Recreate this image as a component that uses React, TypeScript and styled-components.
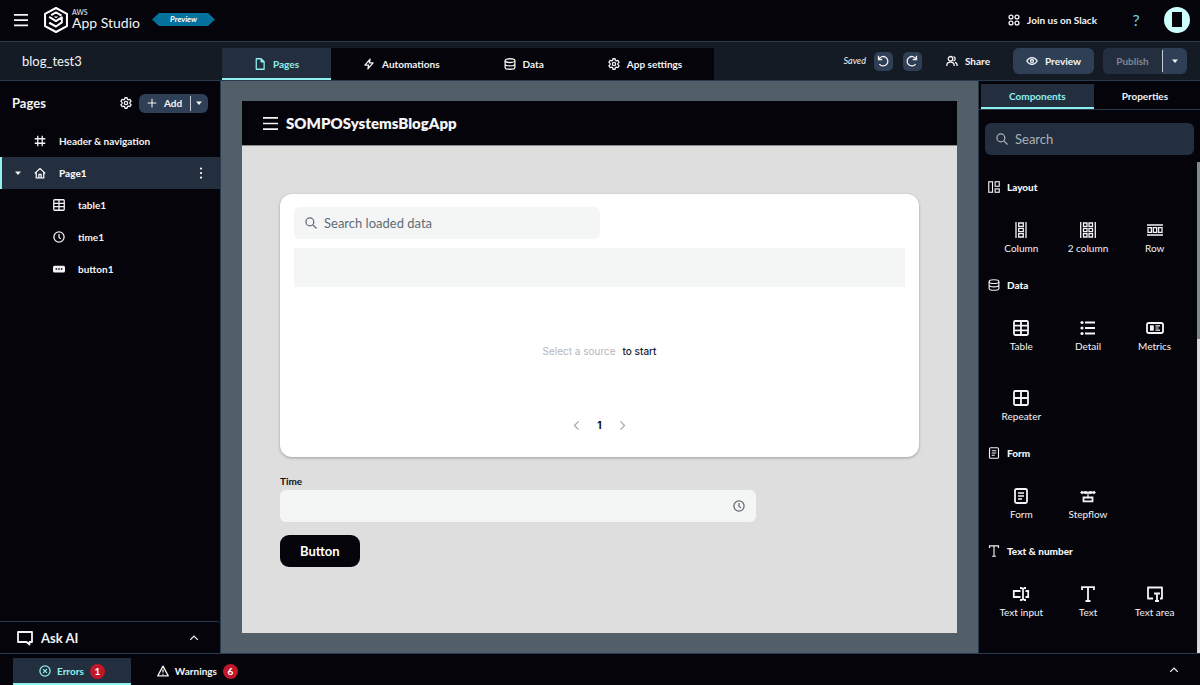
import React from "react";
import styled, { createGlobalStyle, css } from "styled-components";

const color = {
  ink: "#04040a",
  panel: "#232f3e",
  bar: "#141b24",
  line: "#2a3a4e",
  button: "#2f3f55",
  aqua: "#8ff0ee",
  text: "#f4f4f6",
  canvas: "#525f69",
  page: "#dedede",
  field: "#f4f6f6",
  red: "#c0172b",
};

const GlobalStyle = createGlobalStyle`
  * { box-sizing: border-box; }
  body {
    margin: 0;
    background: ${color.ink};
    color: ${color.text};
    font-family: Lato, "Noto Sans", sans-serif;
    font-size: 10px;
    line-height: 16px;
  }
  button, input { font: inherit; color: inherit; }
  button { border: 0; padding: 0; background: none; cursor: pointer; }
  h1, h2, h3, ul, p { margin: 0; padding: 0; font: inherit; }
  ul { list-style: none; }
  a { color: inherit; text-decoration: none; }
`;

/* ---------- icons ---------- */

const Svg = styled.svg<{ $size: number; $stroke: number }>`
  display: block;
  flex: none;
  width: ${(p) => p.$size}px;
  height: ${(p) => p.$size}px;
  fill: none;
  stroke: currentColor;
  stroke-width: ${(p) => p.$stroke};
`;

const dot = { fill: "currentColor", stroke: "none" };

const glyphs = {
  menu: <path d="M0 2h16M0 8h16M0 14h16" />,
  slack: (
    <>
      <circle cx="4" cy="4" r="2.6" />
      <circle cx="12" cy="4" r="2.6" />
      <circle cx="4" cy="12" r="2.6" />
      <circle cx="12" cy="12" r="2.6" />
    </>
  ),
  file: <path d="M9.500 1H3v14h10.500V5L9.500 1v4h4" strokeLinejoin="round" />,
  bolt: <path d="M9.500 1.500 2.500 9.500h5L6.500 14.500l7-8h-5z" strokeLinejoin="round" />,
  data: (
    <>
      <ellipse cx="8" cy="3.500" rx="6.500" ry="2.500" />
      <path d="M1.500 3.500v9c0 1.400 2.900 2.500 6.500 2.500s6.500-1.100 6.500-2.500v-9M1.500 8c0 1.400 2.900 2.500 6.500 2.500s6.500-1.100 6.500-2.500" />
    </>
  ),
  gear: (
    <>
      <path
        d="M6.600 1h2.800l.5 2.100 1.400.8 2.100-.6 1.400 2.400L13.200 7.200v1.600l1.600 1.500-1.400 2.400-2.100-.6-1.400.8-.5 2.100H6.600l-.5-2.100-1.400-.8-2.100.6-1.400-2.400 1.600-1.500V7.200L1.200 5.700l1.400-2.400 2.100.6 1.400-.8z"
        strokeLinejoin="round"
      />
      <circle cx="8" cy="8" r="2.200" />
    </>
  ),
  undo: <path d="M2 1v5h5M2.300 6A6.300 6.300 0 1 1 3.200 12.200" />,
  redo: <path d="M14 1v5H9M13.700 6A6.300 6.300 0 1 0 12.800 12.200" />,
  share: (
    <>
      <circle cx="6" cy="5" r="3" />
      <path d="M1 14.500c0-3.200 2-5 5-5s5 1.800 5 5M10 2.100a3 3 0 0 1 0 5.800M12 9.800c2 .7 3 2.300 3 4.700" />
    </>
  ),
  eye: (
    <>
      <path d="M1 8c1.800-3 4.200-4.500 7-4.500S13.200 5 15 8c-1.800 3-4.200 4.500-7 4.500S2.800 11 1 8z" strokeLinejoin="round" />
      <circle cx="8" cy="8" r="2" />
    </>
  ),
  caret: <path d="M2 5h12L8 12z" {...dot} />,
  up: <path d="m2 11 6-6 6 6" />,
  left: <path d="m11 2-6 6 6 6" />,
  right: <path d="m5 2 6 6-6 6" />,
  plus: <path d="M8 1v14M1 8h14" />,
  hash: <path d="M5 1v14M11 1v14M1 5h14M1 11h14" />,
  home: <path d="M1 8.500 8 2l7 6.500M3 7v7.500h10V7M6.500 14v-4h3v4" strokeLinejoin="round" />,
  more: (
    <>
      <circle cx="8" cy="2" r="1.500" {...dot} />
      <circle cx="8" cy="8" r="1.500" {...dot} />
      <circle cx="8" cy="14" r="1.500" {...dot} />
    </>
  ),
  table: (
    <>
      <rect x="1" y="1" width="14" height="14" rx="1.200" />
      <path d="M1 5.700h14M1 10.300h14M8 1v14" />
    </>
  ),
  clock: (
    <>
      <circle cx="8" cy="8" r="6.800" />
      <path d="M8 4v4.500l2.500 2" />
    </>
  ),
  button: (
    <>
      <rect x="0" y="3.500" width="16" height="9" rx="2" {...dot} />
      <path d="M3.500 8h2M7 8h2M10.500 8h2" stroke={color.ink} />
    </>
  ),
  chat: <path d="M1 2h14v10h-2.500v2.500L9.500 12H1z" strokeLinejoin="round" />,
  error: (
    <>
      <circle cx="8" cy="8" r="6.800" />
      <path d="m5.500 5.500 5 5M10.500 5.500l-5 5" />
    </>
  ),
  warning: <path d="M8 1.500 15 14.500H1zM8 6v4M8 11.500v1.500" strokeLinejoin="round" />,
  search: (
    <>
      <circle cx="6.500" cy="6.500" r="5.200" />
      <path d="m10.500 10.500 4.800 4.800" />
    </>
  ),
  layout: (
    <>
      <rect x="1" y="1" width="5" height="14" />
      <rect x="9.500" y="1" width="5.500" height="6" />
      <rect x="9.500" y="10.500" width="5.500" height="4.500" />
    </>
  ),
  column: (
    <>
      <path d="M3 0v16M13 0v16" strokeWidth="1.300" />
      <path d="M5.700 1h4.600v3.400H5.700zM5.700 6.300h4.600v3.400H5.700zM5.700 11.600h4.600V15H5.700z" strokeWidth="1.300" />
    </>
  ),
  columns: (
    <>
      <path d="M.7 0v16M15.300 0v16" strokeWidth="1.300" />
      <path
        d="M3.500 1H7v3.400H3.500zM3.500 6.300H7v3.400H3.500zM3.500 11.600H7V15H3.500zM9 1h3.500v3.400H9zM9 6.300h3.500v3.400H9zM9 11.600h3.500V15H9z"
        strokeWidth="1.300"
      />
    </>
  ),
  row: (
    <>
      <path d="M0 3h16M0 13h16" strokeWidth="1.300" />
      <path d="M1 5.700h3.400v4.600H1zM6.300 5.700h3.400v4.600H6.300zM11.600 5.700H15v4.600h-3.400z" strokeWidth="1.300" />
    </>
  ),
  detail: (
    <>
      <circle cx="2" cy="2.500" r="1.600" {...dot} />
      <circle cx="2" cy="8" r="1.600" {...dot} />
      <circle cx="2" cy="13.500" r="1.600" {...dot} />
      <path d="M5 2.500h10M5 8h10M5 13.500h10" />
    </>
  ),
  metrics: (
    <>
      <rect x="0" y="3" width="16" height="10" rx="1.800" />
      <rect x="3" y="5.300" width="3.800" height="5.400" {...dot} />
      <path d="M8.500 5.800H13M8.500 8h3M8.500 10.200H13" strokeWidth="1.200" />
    </>
  ),
  repeater: (
    <>
      <rect x="1" y="1" width="14" height="14" rx="1.200" />
      <path d="M1 8h14M8 1v14" />
    </>
  ),
  form: (
    <>
      <rect x="2" y="1" width="12" height="14" rx="1.500" />
      <path d="M5 5h6M5 8h6M5 11h4" strokeWidth="1.400" />
    </>
  ),
  stepflow: (
    <>
      <path d="M1 4.500h14M3.500 13.300V9.500h9v3.800z" />
      <path d="M0 4.500 2.500 2.500v4zM16 4.500 13.500 2.500v4z" {...dot} />
      <circle cx="5.500" cy="4.500" r="1.600" {...dot} />
      <circle cx="10.500" cy="4.500" r="1.600" {...dot} />
      <path d="M8 5v4" strokeWidth="1.200" />
    </>
  ),
  type: <path d="M2 4V1.200h12V4M8 1v14M5.500 15h5" />,
  textInput: (
    <path d="M7.500 5H.8v6h6.700M12.500 5h2.700v6h-2.700M7 2h1.500L10 3.200 11.500 2H13M7 14h1.500l1.500-1.200 1.500 1.200H13M10 3v10" />
  ),
  textArea: <path d="M6 12.500H1V1.500h14v11h-2M7 7.500h6M10 7.500V15M8 15h4" strokeLinejoin="round" />,
};

type Glyph = keyof typeof glyphs;

function Icon({ name, size = 12, stroke = 1.700 }: { name: Glyph; size?: number; stroke?: number }) {
  return (
    <Svg $size={size} $stroke={stroke} viewBox="0 0 16 16" overflow="visible" aria-hidden="true">
      {glyphs[name]}
    </Svg>
  );
}

const LogoSvg = styled.svg`
  display: block;
  width: 24px;
  height: 26px;
  fill: none;
  stroke: #fff;
`;

function Logo() {
  return (
    <LogoSvg viewBox="0 0 70 76" aria-hidden="true" strokeLinejoin="round">
      <path d="M35 3 67 20v36L35 73 3 56V20z" strokeWidth="6" />
      <path d="M21 24 35 16l16 9M15 29l20 12 17-11v15L35 57 15 46" strokeWidth="6" />
      <path d="M28 28h14l-7 5z" fill="#fff" stroke="none" />
    </LogoSvg>
  );
}

/* ---------- frame ---------- */

const Shell = styled.div`
  display: flex;
  flex-direction: column;
  min-height: 100vh;
`;

const TopBar = styled.header`
  display: flex;
  align-items: center;
  height: 42px;
  padding: 0 10px 2px 14px;
  border-bottom: 1px solid ${color.line};
`;

const IconButton = styled.button`
  display: flex;
  align-items: center;
  justify-content: center;
`;

const Brand = styled.a`
  display: flex;
  align-items: center;
  gap: 4px;
  margin-left: 16px;
`;

const BrandText = styled.span`
  display: flex;
  flex-direction: column;
  font-size: 14px;
  line-height: 15px;
`;

const BrandSmall = styled.span`
  font-size: 7px;
  line-height: 6px;
`;

const PreviewTag = styled.span`
  width: 63px;
  margin-left: 12px;
  clip-path: polygon(7px 0, calc(100% - 7px) 0, 100% 50%, calc(100% - 7px) 100%, 7px 100%, 0 50%);
  background: #05719c;
  color: #fff;
  font-size: 8px;
  font-style: italic;
  font-weight: 700;
  line-height: 13px;
  text-align: center;
`;

const Spacer = styled.div`
  flex: 1;
`;

const BarLink = styled.a`
  display: flex;
  align-items: center;
  gap: 7px;
  font-weight: 700;
`;

const HelpButton = styled(IconButton)`
  width: 24px;
  margin: 0 16px 0 27px;
  color: #6ed3e6;
  font-size: 16px;
`;

const Avatar = styled(IconButton)`
  width: 26px;
  height: 26px;
  border-radius: 50%;
  background: #ccfffb;

  &::before {
    content: "";
    width: 10px;
    height: 15px;
    background: ${color.ink};
  }
`;

const ToolBar = styled.div`
  display: flex;
  align-items: center;
  height: 39px;
  padding-right: 13px;
  background: ${color.bar};
  border-bottom: 1px solid ${color.line};
`;

const AppName = styled.h1`
  width: 222px;
  padding-left: 22px;
  font-size: 13px;
`;

const TabList = styled.div`
  display: flex;
  align-self: flex-end;
  background: ${color.ink};
`;

const activeTab = css`
  background: ${color.panel};
  color: ${color.aqua};
  border-bottom-color: ${color.aqua};
`;

const Tab = styled.button<{ $active?: boolean }>`
  display: flex;
  align-items: center;
  justify-content: center;
  gap: 7px;
  height: 32px;
  padding: 2px 32px 0;
  border-bottom: 2px solid transparent;
  font-weight: 700;
  ${(p) => p.$active && activeTab}
`;

const Saved = styled.span`
  margin-right: 8px;
  font-size: 9px;
  font-style: italic;
`;

const SquareButton = styled(IconButton)`
  width: 19px;
  height: 19px;
  margin-right: 10px;
  border-radius: 5px;
  background: ${color.button};
`;

const ShareButton = styled.button`
  display: flex;
  align-items: center;
  gap: 7px;
  margin: 0 23px 0 14px;
  font-weight: 700;
`;

const PreviewButton = styled.button`
  display: flex;
  align-items: center;
  justify-content: center;
  gap: 7px;
  width: 81px;
  height: 26px;
  margin-right: 9px;
  border-radius: 6px;
  background: ${color.button};
  font-weight: 700;
`;

const SplitButton = styled.div<{ $height: number }>`
  display: flex;
  height: ${(p) => p.$height}px;
  border-radius: 6px;
  background: ${color.button};
  overflow: hidden;
  font-weight: 700;
`;

const PublishButton = styled.button`
  width: 59px;
  background: ${color.panel};
  color: #7e8894;
`;

const AddButton = styled.button`
  display: flex;
  align-items: center;
  justify-content: center;
  gap: 7px;
  width: 51px;
`;

const SplitCaret = styled(IconButton)<{ $width: number }>`
  position: relative;
  width: ${(p) => p.$width}px;

  &::before {
    content: "";
    position: absolute;
    inset: 2px auto 2px 0;
    width: 1px;
    background: #c7cdd4;
  }
`;

const Workspace = styled.div`
  display: flex;
  flex: 1;
`;

/* ---------- page tree ---------- */

const Sidebar = styled.nav`
  display: flex;
  flex-direction: column;
  width: 221px;
  border-right: 1px solid ${color.line};
`;

const SidebarHead = styled.div`
  display: flex;
  align-items: center;
  gap: 7px;
  height: 44px;
  padding: 0 12px;
`;

const SidebarTitle = styled.h2`
  flex: 1;
  font-size: 13px;
  font-weight: 700;
`;

const TreeRow = styled.li<{ $level: number; $active?: boolean }>`
  display: flex;
  align-items: center;
  height: 32px;
  padding: 0 13px 0 ${(p) => (p.$level ? 51 : 0)}px;
  font-weight: 700;
  border-left: 2px solid transparent;
  ${(p) =>
    p.$active &&
    css`
      background: ${color.panel};
      border-left-color: ${color.aqua};
      font-weight: 900;
    `}
`;

const TreeToggle = styled(IconButton)`
  width: 32px;
`;

const TreeLink = styled.a`
  display: flex;
  flex: 1;
  align-items: center;
  gap: 13px;
`;

const AskAi = styled.button`
  display: flex;
  align-items: center;
  gap: 8px;
  height: 32px;
  margin-top: auto;
  padding: 0 21px 0 17px;
  border-top: 1px solid ${color.line};
  border-radius: 0 3px 0 0;
  font-size: 13px;
  font-weight: 700;
`;

const Grow = styled.span`
  flex: 1;
  text-align: left;
`;

/* ---------- canvas ---------- */

const Canvas = styled.main`
  display: flex;
  flex: 1;
  padding: 20px 21px;
  background: ${color.canvas};
`;

const Artboard = styled.div`
  display: flex;
  flex: 1;
  flex-direction: column;
  background: ${color.page};
`;

const ArtHeader = styled.header`
  display: flex;
  align-items: center;
  gap: 8px;
  height: 45px;
  padding: 0 21px;
  background: ${color.ink};
  border-bottom: 1px solid #8b8b90;
  font-size: 15px;
  font-weight: 800;
`;

const ArtBody = styled.div`
  display: flex;
  flex-direction: column;
  align-items: flex-start;
  padding: 48px 38px;
  color: #10141c;
`;

const TableCard = styled.section`
  display: flex;
  flex-direction: column;
  width: 100%;
  height: 263px;
  padding: 13px 14px 24px;
  border-radius: 12px;
  background: #fff;
  box-shadow: 0 1px 3px rgba(0, 10, 30, 0.3);
`;

const field = css`
  display: flex;
  align-items: center;
  height: 32px;
  border-radius: 6px;
  padding: 0 11px;
`;

const LoadedSearch = styled.label`
  ${field}
  gap: 7px;
  width: 50%;
  background: ${color.field};
  color: #5f6b75;
`;

const BareInput = styled.input`
  flex: 1;
  min-width: 0;
  padding: 0;
  border: 0;
  outline: 0;
  background: none;
  font-size: 13px;

  &::placeholder {
    color: inherit;
    opacity: 1;
  }
`;

const TableHead = styled.div`
  height: 39px;
  margin-top: 9px;
  background: ${color.field};
`;

const EmptyState = styled.p`
  display: flex;
  flex: 1;
  align-items: center;
  justify-content: center;
  gap: 7px;
  padding-bottom: 2px;
  color: #1a2230;
  font-family: Inter, sans-serif;
  font-weight: 500;
`;

const SourceLink = styled.a`
  color: #b9b5b9;
  font-weight: 400;
`;

const Pager = styled.div`
  display: flex;
  align-items: center;
  justify-content: center;
  gap: 15px;
  color: #a3a3a8;
`;

const PageNumber = styled.button`
  color: #04040a;
  font-family: Inter, sans-serif;
  font-weight: 700;
`;

const TimeLabel = styled.label`
  margin-top: 16px;
  font-weight: 700;
`;

const TimeField = styled.div`
  ${field}
  width: calc(75% - 3px);
  margin-top: 1px;
  background: ${color.field};
  color: #5f6b75;
`;

const PrimaryButton = styled.button`
  height: 32px;
  margin-top: 13px;
  padding: 0 20px;
  border-radius: 9px;
  background: ${color.ink};
  color: #fff;
  font-size: 13px;
  font-weight: 700;
`;

/* ---------- component palette ---------- */

const Palette = styled.aside`
  display: flex;
  flex-direction: column;
  width: 222px;
  border-left: 1px solid ${color.line};
`;

const PaletteTabs = styled.div`
  display: flex;
  padding: 3px 0 0 2px;
  border-bottom: 1px solid ${color.line};
`;

const PaletteTab = styled.button<{ $active?: boolean }>`
  height: 25px;
  padding: 0 28px;
  border-bottom: 2px solid transparent;
  font-weight: 700;
  ${(p) => p.$active && activeTab}
`;

const PaletteSearch = styled.label`
  ${field}
  gap: 7px;
  margin: 13px 6px 7px;
  background: ${color.panel};
  color: #aab2bb;
`;

const PaletteBody = styled.div`
  display: flex;
  flex: 1;
`;

const PaletteList = styled.div`
  flex: 1;
  padding-top: 11px;
`;

const GroupTitle = styled.h3`
  display: flex;
  align-items: center;
  gap: 7px;
  height: 28px;
  padding-left: 9px;
  font-weight: 900;
`;

const GroupGrid = styled.div`
  display: grid;
  grid-template-columns: repeat(3, 1fr);
  padding: 0 9px;
`;

const Component = styled.button`
  display: flex;
  flex-direction: column;
  align-items: center;
  justify-content: center;
  gap: 2px;
  height: 70px;
  padding-top: 6px;
`;

const ScrollTrack = styled.div`
  width: 3px;
  background: #dcd9e0;
`;

const ScrollThumb = styled.div`
  height: 36%;
  background: #7f8a92;
`;

/* ---------- status bar ---------- */

const StatusBar = styled.footer`
  display: flex;
  align-items: flex-end;
  height: 32px;
  padding: 0 21px 0 13px;
  border-top: 1px solid ${color.line};
`;

const StatusTab = styled.button<{ $active?: boolean }>`
  display: flex;
  align-items: center;
  gap: 6px;
  height: 27px;
  padding: 1px 26px 0;
  border-bottom: 2px solid transparent;
  font-weight: 700;
  ${(p) => p.$active && activeTab}
`;

const Count = styled.span`
  width: 15px;
  border-radius: 50%;
  background: ${color.red};
  color: #fff;
  line-height: 15px;
  text-align: center;
`;

const StatusToggle = styled(IconButton)`
  align-self: center;
`;

const groups: { title: string; icon: Glyph; items: [string, Glyph][] }[] = [
  { title: "Layout", icon: "layout", items: [["Column", "column"], ["2 column", "columns"], ["Row", "row"]] },
  {
    title: "Data",
    icon: "data",
    items: [["Table", "table"], ["Detail", "detail"], ["Metrics", "metrics"], ["Repeater", "repeater"]],
  },
  { title: "Form", icon: "form", items: [["Form", "form"], ["Stepflow", "stepflow"]] },
  {
    title: "Text & number",
    icon: "type",
    items: [["Text input", "textInput"], ["Text", "type"], ["Text area", "textArea"]],
  },
];

const children: [string, Glyph][] = [
  ["table1", "table"],
  ["time1", "clock"],
  ["button1", "button"],
];

export default function App() {
  return (
    <Shell>
      <GlobalStyle />
      <TopBar>
        <IconButton aria-label="Menu">
          <Icon name="menu" size={14} stroke={2} />
        </IconButton>
        <Brand href="#">
          <Logo />
          <BrandText>
            <BrandSmall>AWS</BrandSmall>
            App Studio
          </BrandText>
        </Brand>
        <PreviewTag>Preview</PreviewTag>
        <Spacer />
        <BarLink href="#">
          <Icon name="slack" />
          Join us on Slack
        </BarLink>
        <HelpButton>?</HelpButton>
        <Avatar aria-label="Account" />
      </TopBar>

      <ToolBar>
        <AppName>blog_test3</AppName>
        <TabList role="tablist">
          <Tab role="tab" $active>
            <Icon name="file" />
            Pages
          </Tab>
          <Tab role="tab">
            <Icon name="bolt" />
            Automations
          </Tab>
          <Tab role="tab">
            <Icon name="data" />
            Data
          </Tab>
          <Tab role="tab">
            <Icon name="gear" />
            App settings
          </Tab>
        </TabList>
        <Spacer />
        <Saved>Saved</Saved>
        <SquareButton aria-label="Undo">
          <Icon name="undo" />
        </SquareButton>
        <SquareButton aria-label="Redo">
          <Icon name="redo" />
        </SquareButton>
        <ShareButton>
          <Icon name="share" />
          Share
        </ShareButton>
        <PreviewButton>
          <Icon name="eye" />
          Preview
        </PreviewButton>
        <SplitButton $height={26}>
          <PublishButton>Publish</PublishButton>
          <SplitCaret $width={25} aria-label="Publish options">
            <Icon name="caret" size={8} />
          </SplitCaret>
        </SplitButton>
      </ToolBar>

      <Workspace>
        <Sidebar>
          <SidebarHead>
            <SidebarTitle>Pages</SidebarTitle>
            <IconButton aria-label="Page settings">
              <Icon name="gear" />
            </IconButton>
            <SplitButton $height={19}>
              <AddButton>
                <Icon name="plus" size={10} />
                Add
              </AddButton>
              <SplitCaret $width={18} aria-label="Add options">
                <Icon name="caret" size={8} />
              </SplitCaret>
            </SplitButton>
          </SidebarHead>
          <ul>
            <TreeRow $level={0}>
              <TreeToggle as="span" />
              <TreeLink href="#">
                <Icon name="hash" />
                Header &amp; navigation
              </TreeLink>
            </TreeRow>
            <TreeRow $level={0} $active>
              <TreeToggle aria-label="Collapse Page1">
                <Icon name="caret" size={8} />
              </TreeToggle>
              <TreeLink href="#">
                <Icon name="home" />
                Page1
              </TreeLink>
              <IconButton aria-label="Page1 actions">
                <Icon name="more" />
              </IconButton>
            </TreeRow>
            {children.map(([label, icon]) => (
              <TreeRow key={label} $level={1}>
                <TreeLink href="#">
                  <Icon name={icon} />
                  {label}
                </TreeLink>
              </TreeRow>
            ))}
          </ul>
          <AskAi>
            <Icon name="chat" size={16} stroke={1.800} />
            <Grow>Ask AI</Grow>
            <Icon name="up" size={10} stroke={2} />
          </AskAi>
        </Sidebar>

        <Canvas>
          <Artboard>
            <ArtHeader>
              <IconButton aria-label="App menu">
                <Icon name="menu" size={15} />
              </IconButton>
              SOMPOSystemsBlogApp
            </ArtHeader>
            <ArtBody>
              <TableCard>
                <LoadedSearch>
                  <Icon name="search" />
                  <BareInput placeholder="Search loaded data" aria-label="Search loaded data" />
                </LoadedSearch>
                <TableHead />
                <EmptyState>
                  <SourceLink href="#">Select a source</SourceLink>
                  to start
                </EmptyState>
                <Pager>
                  <IconButton aria-label="Previous page">
                    <Icon name="left" size={11} />
                  </IconButton>
                  <PageNumber>1</PageNumber>
                  <IconButton aria-label="Next page">
                    <Icon name="right" size={11} />
                  </IconButton>
                </Pager>
              </TableCard>
              <TimeLabel htmlFor="time">Time</TimeLabel>
              <TimeField>
                <BareInput id="time" />
                <Icon name="clock" />
              </TimeField>
              <PrimaryButton>Button</PrimaryButton>
            </ArtBody>
          </Artboard>
        </Canvas>

        <Palette>
          <PaletteTabs role="tablist">
            <PaletteTab role="tab" $active>
              Components
            </PaletteTab>
            <PaletteTab role="tab">Properties</PaletteTab>
          </PaletteTabs>
          <PaletteSearch>
            <Icon name="search" />
            <BareInput placeholder="Search" aria-label="Search components" />
          </PaletteSearch>
          <PaletteBody>
            <PaletteList>
              {groups.map((group) => (
                <section key={group.title}>
                  <GroupTitle>
                    <Icon name={group.icon} stroke={1.500} />
                    {group.title}
                  </GroupTitle>
                  <GroupGrid>
                    {group.items.map(([label, icon]) => (
                      <Component key={label}>
                        <Icon name={icon} size={16} stroke={1.800} />
                        {label}
                      </Component>
                    ))}
                  </GroupGrid>
                </section>
              ))}
            </PaletteList>
            <ScrollTrack>
              <ScrollThumb />
            </ScrollTrack>
          </PaletteBody>
        </Palette>
      </Workspace>

      <StatusBar>
        <StatusTab $active>
          <Icon name="error" />
          Errors
          <Count>1</Count>
        </StatusTab>
        <StatusTab>
          <Icon name="warning" />
          Warnings
          <Count>6</Count>
        </StatusTab>
        <Spacer />
        <StatusToggle aria-label="Expand issues">
          <Icon name="up" size={10} stroke={2} />
        </StatusToggle>
      </StatusBar>
    </Shell>
  );
}
